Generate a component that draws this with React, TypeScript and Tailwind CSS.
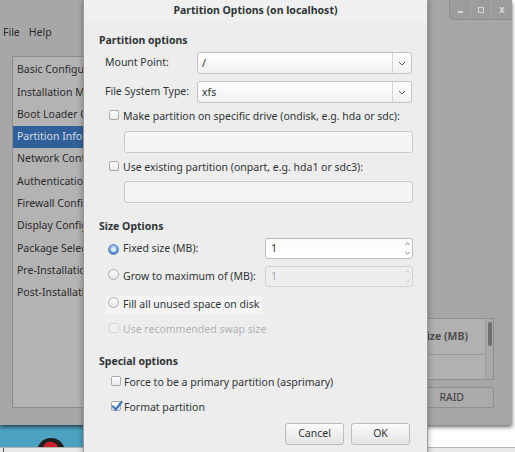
import React from "react";

const txt = "text-[#2e3436]";

function Check({ checked, disabled }: { checked?: boolean; disabled?: boolean }) {
  return (
    <span
      className={`relative inline-block h-[10px] w-[10px] rounded-[2px] border ${
        disabled ? "border-[#d6d6d6] bg-[#efefef]" : "border-[#a9a9a9] bg-gradient-to-b from-white to-[#e9e9e9]"
      }`}
    >
      {checked && (
        <svg viewBox="0 0 12 12" className="absolute -left-[1px] -top-[2px] h-[12px] w-[12px]">
          <path d="M2 6.5 L4.8 9.5 L10.5 2" fill="none" stroke="#3f78c2" strokeWidth="2.2" strokeLinecap="round" />
        </svg>
      )}
    </span>
  );
}

function Radio({ checked }: { checked?: boolean }) {
  return (
    <span
      className={`inline-flex h-[11px] w-[11px] items-center justify-center rounded-full border ${
        checked ? "border-[#5a86bd] bg-gradient-to-b from-[#9fc3ef] to-[#4b83cc]" : "border-[#a9a9a9] bg-gradient-to-b from-white to-[#e6e6e6]"
      }`}
    >
      {checked && <span className="h-[5px] w-[5px] rounded-full bg-[#dcebff]" />}
    </span>
  );
}

function Chevron({ up, className }: { up?: boolean; className?: string }) {
  return (
    <svg viewBox="0 0 8 5" className={className}>
      <path d={up ? "M1 4 L4 1 L7 4" : "M1 1 L4 4 L7 1"} fill="none" stroke="currentColor" strokeWidth="1" />
    </svg>
  );
}

function Combo({ value }: { value: string }) {
  return (
    <div className="flex h-[22px] w-[215px] rounded-[3px] border border-[#c3c3c3] bg-gradient-to-b from-white to-[#f1f1f1]">
      <span className={`flex-1 pl-[4px] leading-[20px] ${txt}`}>{value}</span>
      <span className="flex w-[19px] items-center justify-center border-l border-[#d4d4d4] text-[#5a5a5a]">
        <Chevron className="h-[5px] w-[8px]" />
      </span>
    </div>
  );
}

function Spin({ disabled }: { disabled?: boolean }) {
  return (
    <div
      className={`flex h-[21px] w-[148px] rounded-[3px] border ${
        disabled ? "border-[#d2d2d2] bg-[#eeeeee]" : "border-[#bdbdbd] bg-gradient-to-b from-[#fafafa] to-white"
      }`}
    >
      <span className={`flex-1 pl-[5px] leading-[19px] ${disabled ? "text-[#a8a8a8]" : txt}`}>1</span>
      <span className={`flex w-[10px] flex-col items-center justify-center gap-[5px] ${disabled ? "text-[#c4c4c4]" : "text-[#6a6a6a]"}`}>
        <Chevron up className="h-[4px] w-[7px]" />
        <Chevron className="h-[4px] w-[7px]" />
      </span>
    </div>
  );
}

function Entry() {
  return <div className="ml-[40px] h-[22px] w-[289px] rounded-[3px] border border-[#cacaca] bg-[#f4f4f3]" />;
}

function Button({ label }: { label: string }) {
  return (
    <div
      className={`flex h-[22px] w-[59px] items-center justify-center rounded-[3px] border border-[#bcbcbc] bg-gradient-to-b from-[#fbfbfb] to-[#e4e4e4] ${txt}`}
    >
      {label}
    </div>
  );
}

function Dialog() {
  return (
    <div className="absolute left-[83px] top-0 flex h-[470px] w-[345px] flex-col border-x border-[#9a9a9a] bg-[#ededed] text-[10.5px] shadow-[0_0_6px_rgba(0,0,0,0.35)]">
      <div className={`flex h-[22px] items-center justify-center bg-[#f0f0f0] font-bold ${txt}`}>
        Partition Options (on localhost)
      </div>

      <div className={`ml-[15px] mt-[10px] h-[16px] font-bold leading-[16px] ${txt}`}>Partition options</div>

      <div className="mt-[4px] flex h-[22px] items-center">
        <span className={`ml-[21px] w-[92px] ${txt}`}>Mount Point:</span>
        <Combo value="/" />
      </div>
      <div className="mt-[7px] flex h-[22px] items-center">
        <span className={`ml-[21px] w-[92px] ${txt}`}>File System Type:</span>
        <Combo value="xfs" />
      </div>

      <div className="mt-[7px] flex h-[14px] items-center">
        <span className="ml-[25px] w-[14px]">
          <Check />
        </span>
        <span className={txt}>Make partition on specific drive (ondisk, e.g. hda or sdc):</span>
      </div>
      <div className="mt-[7px]">
        <Entry />
      </div>

      <div className="mt-[8px] flex h-[14px] items-center">
        <span className="ml-[25px] w-[14px]">
          <Check />
        </span>
        <span className={txt}>Use existing partition (onpart, e.g. hda1 or sdc3):</span>
      </div>
      <div className="mt-[6px]">
        <Entry />
      </div>

      <div className={`ml-[15px] mt-[15px] h-[16px] font-bold leading-[16px] ${txt}`}>Size Options</div>

      <div className="mt-[4px] flex h-[21px] items-center">
        <span className="ml-[24px] w-[15px]">
          <Radio checked />
        </span>
        <span className={`w-[142px] ${txt}`}>Fixed size (MB):</span>
        <Spin />
      </div>
      <div className="mt-[7px] flex h-[21px] items-center">
        <span className="ml-[24px] w-[15px]">
          <Radio />
        </span>
        <span className={`w-[142px] ${txt}`}>Grow to maximum of (MB):</span>
        <Spin disabled />
      </div>
      <div className="ml-[22px] mt-[9px] flex h-[18px] w-[156px] items-center whitespace-nowrap bg-[#f4f4f4]">
        <span className="ml-[2px] w-[15px] shrink-0">
          <Radio />
        </span>
        <span className={txt}>Fill all unused space on disk</span>
      </div>
      <div className="mt-[9px] flex h-[14px] items-center">
        <span className="ml-[25px] w-[14px]">
          <Check disabled />
        </span>
        <span className="text-[#b2b2b2]">Use recommended swap size</span>
      </div>

      <div className={`ml-[15px] mt-[16px] h-[16px] font-bold leading-[16px] ${txt}`}>Special options</div>

      <div className="mt-[7px] flex h-[14px] items-center">
        <span className="ml-[27px] w-[13px]">
          <Check />
        </span>
        <span className={txt}>Force to be a primary partition (asprimary)</span>
      </div>
      <div className="mt-[11px] flex h-[14px] items-center">
        <span className="ml-[27px] w-[13px]">
          <Check checked />
        </span>
        <span className={txt}>Format partition</span>
      </div>

      <div className="mr-[17px] mt-[8px] flex justify-end gap-[7px]">
        <Button label="Cancel" />
        <Button label="OK" />
      </div>
    </div>
  );
}

const items = [
  "Basic Configuration",
  "Installation Method",
  "Boot Loader Options",
  "Partition Information",
  "Network Configuration",
  "Authentication",
  "Firewall Configuration",
  "Display Configuration",
  "Package Selection",
  "Pre-Installation Script",
  "Post-Installation Script",
];

export default function App() {
  return (
    <div className="relative h-[452px] w-[515px] overflow-hidden bg-white font-['Noto_Sans',sans-serif] text-[10.5px]">
      {/* background main window */}
      <div className="relative z-10 flex h-[425px] w-[512px] flex-col bg-[#a7a7a7] shadow-[0_2px_4px_rgba(0,0,0,0.6)]">
        <div className="h-[21px]" />
        <div className="flex h-[24px] items-center gap-[9px] pl-[3px] text-[#2b2b2b]">
          <span>File</span>
          <span>Help</span>
        </div>
        <div className="flex flex-1">
          <div className="ml-[12px] mt-[11px] flex h-[352px] w-[72px] flex-col overflow-hidden whitespace-nowrap border-y border-l border-[#8e8e8e] bg-[#b3b3b3] pt-[2px] text-[#2b2b2b]">
            {items.map((it) => (
              <div
                key={it}
                className={`flex h-[22.3px] shrink-0 items-center pl-[4px] ${it === "Partition Information" ? "bg-[#30609a] text-[#d9dde3]" : ""}`}
              >
                {it}
              </div>
            ))}
          </div>
          <div className="ml-auto mr-[18px] flex w-[80px] flex-col pt-[273px]">
            <div className="flex h-[62px] border-y border-r border-[#8f8f8f] bg-[#b1b1b1]">
              <div className="flex flex-1 flex-col overflow-hidden">
                <div className="flex h-[36px] items-center justify-end whitespace-nowrap border-b border-[#9a9a9a] pr-[17px] font-bold text-[#4e4e4e]">
                  Size (MB)
                </div>
              </div>
              <div className="w-[8px] border-l border-[#9d9d9d] bg-[#a9a9a9] pt-[3px]">
                <div className="mx-auto h-[24px] w-[4px] rounded-full bg-[#6f6f6f]" />
              </div>
            </div>
            <div className="mt-[7px] flex h-[21px] items-center justify-end rounded-r-[3px] border-y border-r border-[#8f8f8f] bg-[#ababab] pr-[29px] text-[#3a3a3a]">
              RAID
            </div>
          </div>
        </div>
        {/* window controls */}
        <div className="absolute right-0 top-0 flex h-[20px] w-[63px] rounded-bl-[5px] border-b border-l border-[#8c8c8c] bg-[#9c9c9c] text-[#d4d4d4]">
          <span className="flex flex-1 items-end justify-center pb-[6px]">
            <span className="h-[2px] w-[5px] bg-[#d4d4d4]" />
          </span>
          <span className="flex flex-1 items-center justify-center border-x border-[#a8a8a8]">
            <span className="h-[6px] w-[6px] border-[1.5px] border-[#d4d4d4]" />
          </span>
          <span className="flex flex-1 items-center justify-center text-[10px] font-bold">x</span>
        </div>
      </div>

      {/* desktop below */}
      <div className="flex h-[22px]">
        <div className="relative w-[250px] overflow-hidden bg-[#4ba2c1]">
          <svg viewBox="0 0 30 30" className="absolute left-[37px] top-[13px] h-[28px] w-[28px]">
            <circle cx="15" cy="15" r="15" fill="#1e1e1e" />
            <path d="M7 9 C8 5 12 3.5 15 4 C19 4.5 22 7 23 10 L7 10.5 Z" fill="#cc1f2a" />
          </svg>
        </div>
        <div className="flex-1 bg-white" />
      </div>
      <div className="h-[5px] border-t border-[#b5b5b5] bg-[#e9e9e9] pl-[3px]">
        <span className="block h-[4px] w-[1px] bg-[#555]" />
      </div>

      <div className="absolute inset-0 z-20 pointer-events-none">
        <Dialog />
      </div>
    </div>
  );
}
